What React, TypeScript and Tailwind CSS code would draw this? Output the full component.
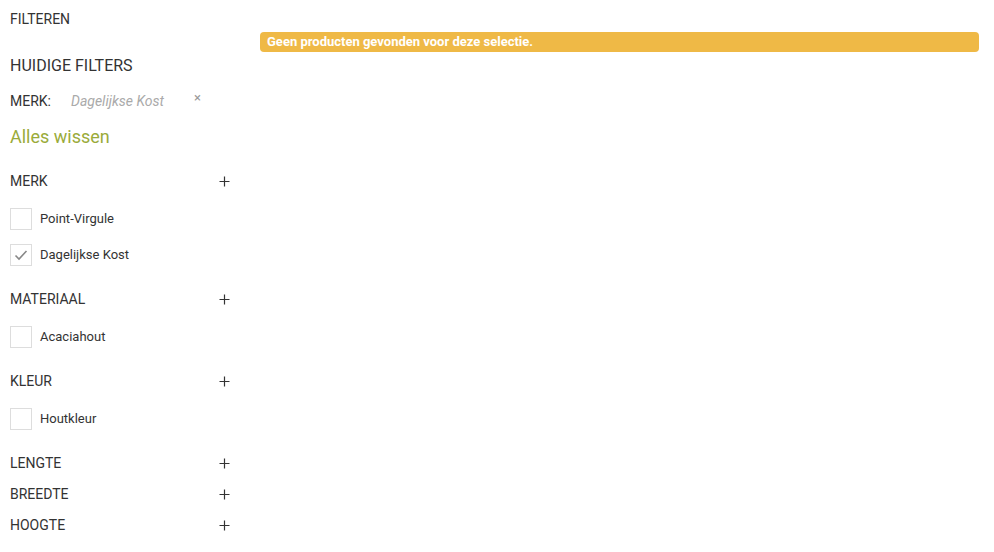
import React from "react";

const Plus = () => (
  <svg width="11" height="11" viewBox="0 0 11 11" className="block">
    <path d="M5.5 0.5v10M0.5 5.5h10" stroke="#333" strokeWidth="1.2" fill="none" />
  </svg>
);

const Box = ({ checked }: { checked?: boolean }) => (
  <div className="w-[22px] h-[22px] border border-[#dddddd] bg-white flex items-center justify-center">
    {checked && (
      <svg width="14" height="12" viewBox="0 0 14 12">
        <path d="M1.5 6.5l3.5 3.5 7.5-8" stroke="#888" strokeWidth="1.6" fill="none" />
      </svg>
    )}
  </div>
);

const Heading = ({ label, mt }: { label: string; mt: string }) => (
  <div className={`${mt} h-[20px] flex items-center justify-between pr-[10px]`}>
    <span className="text-[14px] text-[#333]">{label}</span>
    <Plus />
  </div>
);

const Option = ({ label, checked, mt }: { label: string; checked?: boolean; mt: string }) => (
  <div className={`${mt} h-[22px] flex items-center gap-[8px]`}>
    <Box checked={checked} />
    <span className="text-[13px] text-[#333]">{label}</span>
  </div>
);

export default function App() {
  return (
    <div className="flex w-[994px] h-[552px] bg-white overflow-hidden" style={{ fontFamily: "Roboto, 'Liberation Sans', sans-serif" }}>
      <aside className="w-[240px] shrink-0 pl-[10px] pt-[9px] flex flex-col">
        <div className="h-[20px] flex items-center text-[14px] text-[#333]">FILTEREN</div>
        <div className="mt-[27px] h-[20px] flex items-center text-[16px] text-[#333]">HUIDIGE FILTERS</div>
        <div className="mt-[15px] h-[20px] flex items-center text-[14px] relative">
          <span className="text-[#333]">MERK:</span>
          <span className="ml-[20px] italic text-[#aaaaaa]">Dagelijkse Kost</span>
          <span className="absolute left-[184px] top-[-3px] text-[13px] text-[#999]">×</span>
        </div>
        <div className="mt-[13px] h-[24px] flex items-center text-[18px] text-[#9aab3a]">Alles wissen</div>
        <Heading label="MERK" mt="mt-[23px]" />
        <Option label="Point-Virgule" mt="mt-[17px]" />
        <Option label="Dagelijkse Kost" checked mt="mt-[14px]" />
        <Heading label="MATERIAAL" mt="mt-[23px]" />
        <Option label="Acaciahout" mt="mt-[17px]" />
        <Heading label="KLEUR" mt="mt-[23px]" />
        <Option label="Houtkleur" mt="mt-[17px]" />
        <Heading label="LENGTE" mt="mt-[23px]" />
        <Heading label="BREEDTE" mt="mt-[11px]" />
        <Heading label="HOOGTE" mt="mt-[11px]" />
      </aside>
      <main className="flex-1 pl-[20px] pr-[15px] pt-[32px]">
        <div className="h-[20px] rounded-[4px] bg-[#efb946] px-[7px] flex items-center text-[13px] font-bold text-white">
          Geen producten gevonden voor deze selectie.
        </div>
      </main>
    </div>
  );
}
